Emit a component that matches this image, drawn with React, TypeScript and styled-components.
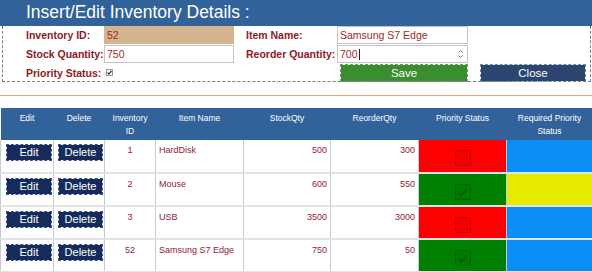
import React from "react";
import styled, { createGlobalStyle } from "styled-components";

const Global = createGlobalStyle`
  html, body { margin: 0; padding: 0; background: #ffffff; }
  body {
    font-family: "Liberation Sans", Arial, sans-serif;
    width: 592px;
    height: 272px;
    overflow: hidden;
  }
`;

const Page = styled.div`
  width: 592px;
`;

const TitleBar = styled.h1`
  margin: 0;
  height: 26px;
  box-sizing: border-box;
  padding-left: 26px;
  background: #31629a;
  color: #ffffff;
  font-size: 17.5px;
  font-weight: normal;
  line-height: 25px;
  white-space: nowrap;
`;

const FormPanel = styled.div`
  margin: 0 1px 0 2px;
  border: 1px dashed #7d7d7d;
  border-top: none;
  padding-left: 23px;
  display: grid;
  grid-template-columns: 78px 130px 103px 131px 118px;
  grid-template-rows: 18px 18px 17px;
  row-gap: 1px;
`;

const Label = styled.div<{ $indent?: boolean }>`
  display: flex;
  align-items: center;
  padding-left: ${(p) => (p.$indent ? "12px" : "0")};
  font-size: 10.5px;
  font-weight: bold;
  color: #8b1a1f;
  white-space: nowrap;
`;

const Field = styled.div<{ $tan?: boolean }>`
  position: relative;
  display: flex;
  align-items: center;
  box-sizing: border-box;
  padding-left: 2px;
  background: ${(p) => (p.$tan ? "#d4b48e" : "#ffffff")};
  border: 1px solid ${(p) => (p.$tan ? "#d4b48e" : "#c4c4c4")};
  font-size: 10.5px;
  color: #9a2a26;
`;

const Caret = styled.span`
  display: inline-block;
  width: 1px;
  height: 11px;
  margin-left: 1px;
  background: #222;
`;

const Spinner = styled.svg`
  position: absolute;
  right: 4px;
  top: 3px;
`;

const TinyCheck = styled.div`
  display: flex;
  align-items: center;
  padding-left: 2px;
`;

const TinyBox = styled.span`
  width: 7px;
  height: 7px;
  box-sizing: border-box;
  border: 1px solid #9a9a9a;
  background: #f4f4f4;
  display: flex;
  align-items: center;
  justify-content: center;
`;

const ActionButton = styled.button<{ $variant: "save" | "close" }>`
  margin: 0 0 0 ${(p) => (p.$variant === "save" ? "3px" : "12px")};
  width: ${(p) => (p.$variant === "save" ? "128px" : "106px")};
  height: 18px;
  padding: 0;
  box-sizing: border-box;
  border: 1.5px dashed ${(p) => (p.$variant === "save" ? "#6d9f63" : "#7b879a")};
  background: ${(p) => (p.$variant === "save" ? "#3a8e2f" : "#2c4571")};
  background-clip: padding-box;
  color: #ffffff;
  font-family: "Liberation Sans", Arial, sans-serif;
  font-size: 11.5px;
  line-height: 13px;
`;

const Divider = styled.div`
  margin-top: 13px;
  height: 1px;
  background: #e9a67b;
`;

const Table = styled.table`
  margin-top: 12px;
  width: 592px;
  border-collapse: collapse;
  table-layout: fixed;
`;

const HeadRow = styled.tr`
  height: 32px;
`;

const Th = styled.th`
  padding: 4px 3px 2px;
  vertical-align: top;
  background: #31629a;
  color: #ffffff;
  font-size: 8.5px;
  font-weight: normal;
  line-height: 13px;
  text-align: center;
  border: none;
`;

const BodyRow = styled.tr`
  height: 33px;
`;

const Td = styled.td<{ $align?: "left" | "center" | "right"; $bg?: string }>`
  padding: 4px 3px 0;
  vertical-align: top;
  text-align: ${(p) => p.$align ?? "left"};
  background: ${(p) => p.$bg ?? "#ffffff"};
  font-size: 9px;
  line-height: 12px;
  color: #8e2233;
  border-bottom: 2px solid #e3e3e3;
  border-left: 1px solid #c3cdd9;
  border-right: 1px solid #c3cdd9;
`;

const ButtonTd = styled.td<{ $first?: boolean }>`
  padding: 4px 1px 0 ${(p) => (p.$first ? "5px" : "4px")};
  vertical-align: top;
  border-bottom: 2px solid #e3e3e3;
  border-left: 1px solid #c3cdd9;
  border-right: 1px solid #c3cdd9;
`;

const RowButton = styled.button`
  display: block;
  width: 100%;
  height: 17px;
  padding: 0;
  box-sizing: border-box;
  border: 1.5px dashed #3e5382;
  background: #152b5c;
  background-clip: padding-box;
  color: #ffffff;
  font-family: "Liberation Sans", Arial, sans-serif;
  font-size: 11px;
  line-height: 13px;
`;

const StatusBox = styled.span`
  display: inline-flex;
  align-items: center;
  justify-content: center;
  margin-top: 6px;
  width: 16px;
  height: 16px;
  box-sizing: border-box;
  border: 1.5px solid rgba(0, 0, 0, 0.2);
  border-radius: 2px;
  background: rgba(0, 0, 0, 0.04);
`;

type Item = {
  id: number;
  name: string;
  stock: number;
  reorder: number;
  priority: boolean;
  required: string;
};

const items: Item[] = [
  { id: 1, name: "HardDisk", stock: 500, reorder: 300, priority: false, required: "#0b8ef6" },
  { id: 2, name: "Mouse", stock: 600, reorder: 550, priority: true, required: "#e6ea00" },
  { id: 3, name: "USB", stock: 3500, reorder: 3000, priority: false, required: "#0b8ef6" },
  { id: 52, name: "Samsung S7 Edge", stock: 750, reorder: 50, priority: true, required: "#0b8ef6" },
];

const widths = [53, 51, 51, 88, 87, 88, 88, 86];

export default function App() {
  return (
    <Page>
      <Global />
      <TitleBar>Insert/Edit Inventory Details :</TitleBar>
      <FormPanel>
        <Label>Inventory ID:</Label>
        <Field $tan>52</Field>
        <Label $indent>Item Name:</Label>
        <Field>Samsung S7 Edge</Field>
        <div />

        <Label>Stock Quantity:</Label>
        <Field>750</Field>
        <Label $indent>Reorder Quantity:</Label>
        <Field>
          700
          <Caret />
          <Spinner width="5" height="10" viewBox="0 0 5 10">
            <path d="M0.5 3.5 L2.5 1.5 L4.5 3.5" fill="none" stroke="#666" strokeWidth="0.9" />
            <path d="M0.5 6.5 L2.5 8.5 L4.5 6.5" fill="none" stroke="#666" strokeWidth="0.9" />
          </Spinner>
        </Field>
        <div />

        <Label>Priority Status:</Label>
        <TinyCheck>
          <TinyBox>
            <svg width="5" height="5" viewBox="0 0 5 5">
              <path d="M0.5 2.6 L1.9 4 L4.5 0.8" fill="none" stroke="#222" strokeWidth="1.1" />
            </svg>
          </TinyBox>
        </TinyCheck>
        <div />
        <ActionButton $variant="save">Save</ActionButton>
        <ActionButton $variant="close">Close</ActionButton>
      </FormPanel>
      <Divider />
      <Table>
        <colgroup>
          {widths.map((w, i) => (
            <col key={i} style={{ width: w }} />
          ))}
        </colgroup>
        <thead>
          <HeadRow>
            <Th>Edit</Th>
            <Th>Delete</Th>
            <Th>Inventory ID</Th>
            <Th>Item Name</Th>
            <Th>StockQty</Th>
            <Th>ReorderQty</Th>
            <Th>Priority Status</Th>
            <Th>Required Priority Status</Th>
          </HeadRow>
        </thead>
        <tbody>
          {items.map((it) => (
            <BodyRow key={it.id}>
              <ButtonTd $first>
                <RowButton>Edit</RowButton>
              </ButtonTd>
              <ButtonTd>
                <RowButton>Delete</RowButton>
              </ButtonTd>
              <Td $align="center">{it.id}</Td>
              <Td>{it.name}</Td>
              <Td $align="right">{it.stock}</Td>
              <Td $align="right">{it.reorder}</Td>
              <Td $align="center" $bg={it.priority ? "#008000" : "#ff0000"}>
                <StatusBox>
                  {it.priority && (
                    <svg width="11" height="11" viewBox="0 0 11 11">
                      <path d="M1.5 6 L4.3 8.8 L9.8 2" fill="none" stroke="rgba(0,0,0,0.22)" strokeWidth="1.6" />
                    </svg>
                  )}
                </StatusBox>
              </Td>
              <Td $bg={it.required} />
            </BodyRow>
          ))}
        </tbody>
      </Table>
    </Page>
  );
}
